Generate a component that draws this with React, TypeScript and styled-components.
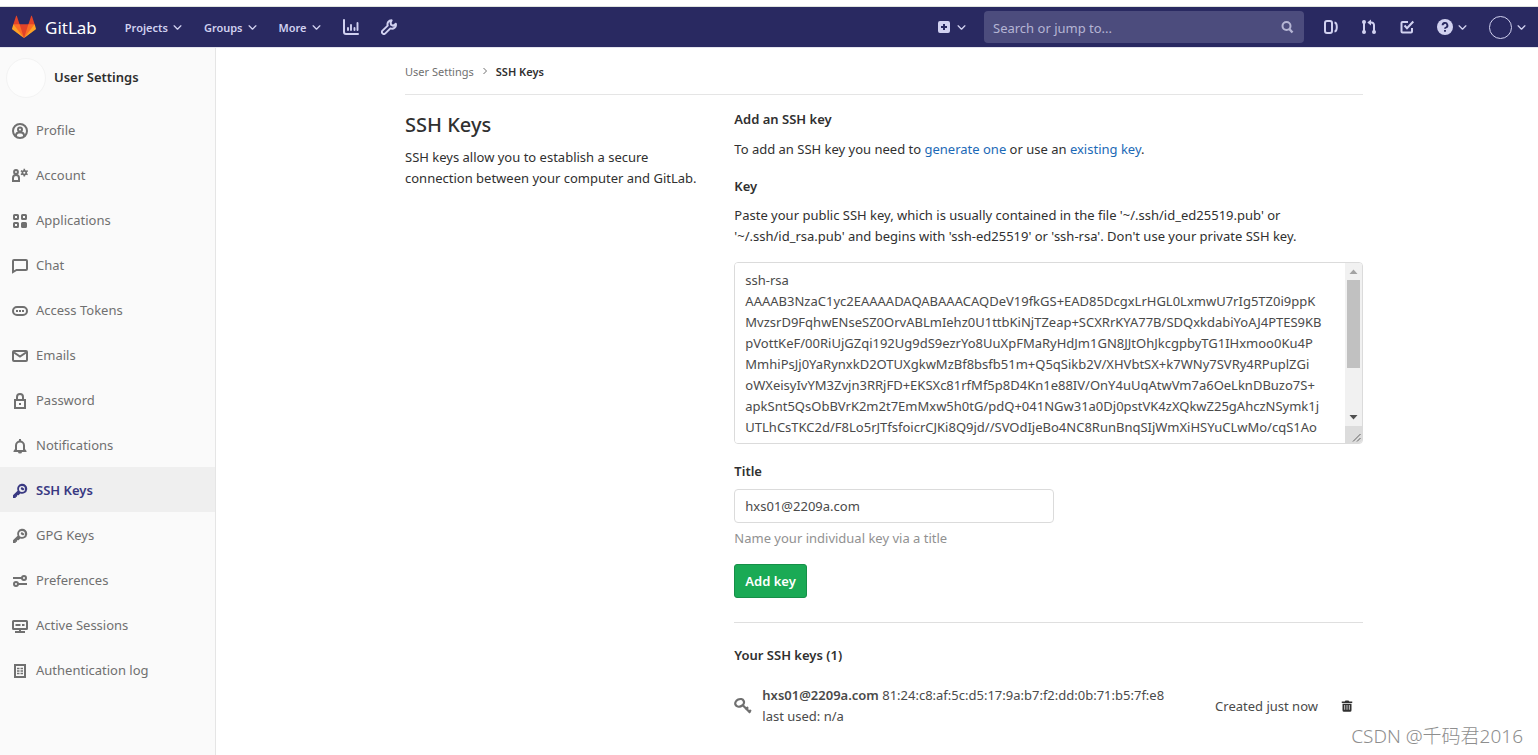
import React from 'react';
import styled, { createGlobalStyle, css } from 'styled-components';

const GlobalStyle = createGlobalStyle`
  *, *::before, *::after { box-sizing: border-box; }
  body {
    margin: 0;
    background: #fff;
    color: #303030;
    font-family: "Noto Sans", "Open Sans", "Noto Sans CJK SC", sans-serif;
    font-size: 13px;
    line-height: 21px;
  }
  h1, h2, p, ul { margin: 0; padding: 0; }
  ul { list-style: none; }
  button, input, textarea { font: inherit; color: inherit; }
  a { color: #1b69b6; text-decoration: none; }
`;

const Page = styled.div`
  display: flex;
  flex-direction: column;
  min-height: 100vh;
  padding-top: 6px;
`;

const Header = styled.header`
  display: flex;
  align-items: center;
  height: 42px;
  padding: 0 12px;
  background: #292961;
  border-top: 1px solid #dfe3df;
  border-bottom: 1px solid #e4e4ee;
  color: #d1d1f0;
`;

const Brand = styled.a`
  display: flex;
  align-items: center;
  gap: 9px;
  margin-right: 28px;
  color: #fff;
  font-size: 17px;
`;

const NavGroup = styled.nav`
  display: flex;
  align-items: center;
  gap: 22px;
`;

const NavButton = styled.button`
  display: flex;
  align-items: center;
  gap: 5px;
  height: 32px;
  padding: 0;
  border: 0;
  background: none;
  color: #d1d1f0;
  font-size: 11px;
  font-weight: 600;
`;

const Spacer = styled.div`
  flex: 1;
`;

const SearchForm = styled.form`
  display: flex;
  align-items: center;
  width: 320px;
  height: 32px;
  margin: 0 19px 0 18px;
  padding: 0 9px;
  border-radius: 4px;
  background: #4c4c7d;
  color: #b5b5d4;
`;

const SearchInput = styled.input`
  flex: 1;
  min-width: 0;
  padding: 2px 0 0;
  border: 0;
  outline: 0;
  background: none;
  font-size: 13px;
  &::placeholder { color: #b5b5d4; opacity: 1; }
`;

const UserCircle = styled.span`
  width: 23px;
  height: 23px;
  border: 1px solid #d1d1f0;
  border-radius: 50%;
`;

const Body = styled.div`
  display: flex;
  flex: 1;
`;

const Sidebar = styled.aside`
  flex: none;
  width: 216px;
  border-right: 1px solid #e5e5e5;
  background: #fafafa;
`;

const SidebarTitle = styled.a`
  display: flex;
  align-items: center;
  gap: 8px;
  height: 59px;
  padding-left: 6px;
  color: #2e2e2e;
  font-weight: 600;
`;

const SidebarAvatar = styled.span`
  width: 40px;
  height: 40px;
  border: 1px solid #f3f3f3;
  border-radius: 50%;
  background: #fdfdfd;
`;

const SidebarLink = styled.a<{ $active?: boolean }>`
  display: flex;
  align-items: center;
  gap: 8px;
  height: 45px;
  padding: 2px 0 0 12px;
  color: #707070;
  ${(p) =>
    p.$active &&
    css`
      background: #efefef;
      color: #393982;
      font-weight: 600;
    `}
`;

const Main = styled.main`
  flex: 1;
  min-width: 0;
  padding: 0 16px 16px 30px;
`;

const Container = styled.div`
  max-width: 958px;
  margin: 0 auto;
`;

const Breadcrumbs = styled.nav`
  display: flex;
  align-items: center;
  gap: 7px;
  height: 47px;
  border-bottom: 1px solid #e5e5e5;
  color: #707070;
  font-size: 11px;
  a { color: #707070; }
  span { color: #303030; font-weight: 600; }
`;

const Row = styled.div`
  display: flex;
  margin: 14px -15px 0;
`;

const Column = styled.section<{ $span: number }>`
  flex: 0 0 calc(100% * ${(p) => p.$span} / 12);
  min-width: 0;
  padding: 0 15px;
`;

const PageTitle = styled.h1`
  margin: 4px 0 10px;
  font-size: 20px;
  line-height: 24px;
  font-weight: 500;
`;

const SectionTitle = styled.h2`
  font-size: 13px;
  line-height: 21px;
  font-weight: 600;
`;

const Text = styled.p`
  margin: 9px 0 16px;
`;

const Description = styled.p`
  margin: 8px 0 15px;
`;

const Label = styled.label`
  display: block;
  font-weight: 600;
`;

const KeyBox = styled.div`
  display: flex;
  height: 182px;
  border: 1px solid #dbdbdb;
  border-radius: 4px;
  overflow: hidden;
`;

const KeyField = styled.textarea`
  display: block;
  flex: 1;
  min-width: 0;
  padding: 7px 0 7px 10px;
  border: 0;
  outline: 0;
  background: #fff;
  color: #4a4a4a;
  white-space: pre;
  overflow-x: hidden;
  overflow-y: scroll;
  resize: none;
  line-height: 21px;
  scrollbar-width: none;
`;

const ScrollTrack = styled.div`
  display: flex;
  flex-direction: column;
  flex: none;
  width: 17px;
  background: #f1f1f1;
`;

const ScrollThumb = styled.div`
  flex: none;
  height: 88px;
  margin: 0 2px;
  background: #c1c1c1;
`;

const Corner = styled.div`
  background: #dcdcdc;
`;

const TitleField = styled.input`
  display: block;
  width: 320px;
  height: 34px;
  margin: 7px 0 5px;
  padding: 0 10px;
  border: 1px solid #dbdbdb;
  border-radius: 4px;
  outline: 0;
  color: #4a4a4a;
`;

const Help = styled.p`
  color: #919191;
`;

const SubmitButton = styled.button`
  height: 34px;
  margin-top: 15px;
  padding: 0 10px;
  border: 1px solid #168f48;
  border-radius: 3px;
  background: #1aaa55;
  color: #fff;
  font-weight: 600;
`;

const FormBlock = styled.div`
  margin-top: 17px;
`;

const Divider = styled.hr`
  height: 1px;
  margin: 24px 0 22px;
  border: 0;
  background: #dfdfdf;
`;

const KeyItem = styled.li`
  display: flex;
  align-items: center;
  gap: 10px;
  margin-top: 19px;
  color: #4a4a4a;
`;

const KeyInfo = styled.div`
  flex: 1;
  strong { font-weight: 600; }
`;

const KeyMark = styled.span`
  color: #707070;
`;

const DeleteButton = styled.button`
  display: grid;
  place-items: center;
  width: 32px;
  height: 32px;
  margin-left: 3px;
  padding: 0;
  border: 0;
  background: none;
  color: #303030;
`;

const Watermark = styled.div`
  position: absolute;
  right: 15px;
  bottom: 6px;
  color: #8e8e8e;
  font-size: 19px;
  font-weight: 300;
  line-height: 26px;
`;

type IconName =
  | 'profile' | 'account' | 'applications' | 'chat' | 'token' | 'mail' | 'lock' | 'bell'
  | 'key' | 'preferences' | 'monitor' | 'log' | 'chart' | 'wrench' | 'plus' | 'search'
  | 'issues' | 'merge' | 'todo' | 'help' | 'trash' | 'keyLarge' | 'chevron' | 'angle';

const line = { fill: 'none', stroke: 'currentColor', strokeWidth: 2 } as const;

const shapes: Record<IconName, React.ReactNode> = {
  profile: (
    <g {...line}>
      <circle cx="8" cy="8" r="7" />
      <circle cx="8" cy="6.6" r="2" />
      <path d="M4 13v-1a3 3 0 0 1 3-2.4h2A3 3 0 0 1 12 12v1" />
    </g>
  ),
  account: (
    <g {...line}>
      <circle cx="4" cy="4" r="1.9" />
      <path d="M1 13v-3a3 3 0 0 1 6 0v3Z" />
      <circle cx="12.300" cy="4.700" r="1.900" strokeWidth="1.700" />
      <path d="M12.300 .8v2M12.300 6.600v2M8.900 2.750l1.600.9M14.100 5.750l1.600.9M8.900 6.650l1.600-.9M14.100 3.650l1.600-.9" strokeWidth="1.600" />
    </g>
  ),
  applications: (
    <g {...line}>
      <rect x="2" y="2" width="4" height="4" rx=".5" />
      <rect x="10" y="2" width="4" height="4" rx=".5" />
      <rect x="2" y="10" width="4" height="4" rx=".5" />
      <rect x="10" y="10" width="4" height="4" rx=".5" fill="currentColor" />
    </g>
  ),
  chat: <path {...line} d="M1 14V3a1 1 0 0 1 1-1h12a1 1 0 0 1 1 1v8a1 1 0 0 1-1 1H4.500Z" />,
  token: (
    <g>
      <rect {...line} x="1" y="4" width="14" height="8" rx="4" />
      <path d="M4 7h2v2H4zM7 7h2v2H7zM10 7h2v2h-2z" fill="currentColor" />
    </g>
  ),
  mail: (
    <g {...line}>
      <rect x="1" y="3" width="14" height="10" rx="1" />
      <path d="M2 4.500l6 4 6-4" />
    </g>
  ),
  lock: (
    <g {...line}>
      <rect x="3" y="7" width="10" height="8" />
      <path d="M5 7V4a3 3 0 0 1 6 0v3" />
      <path d="M7 11h2" />
    </g>
  ),
  bell: (
    <g>
      <path {...line} d="M4 12V7.500a4 4 0 0 1 8 0V12" />
      <path d="M1.500 13 3 11h2v1h6v-1h2l1.500 2v1h-13zM7 1h2v2.500H7zM6 14h4a2 1.500 0 0 1-4 0z" fill="currentColor" />
    </g>
  ),
  key: (
    <path
      fill="currentColor"
      fillRule="evenodd"
      d="M5.600 7.700A5 5 0 1 1 8.300 10.400L6.500 12.200H5v1.500H3.700V15H1v-2.700zM10 3a3 3 0 1 0 0 6 3 3 0 0 0 0-6zm0 1.200a1 1 0 0 1 1 1h1a1 1 0 0 1-2 1.500 1 1 0 0 1 0-2.500z"
    />
  ),
  preferences: (
    <g {...line}>
      <path d="M1 5h9M6 11h9" />
      <circle cx="12" cy="5" r="2" />
      <circle cx="4" cy="11" r="2" />
    </g>
  ),
  monitor: (
    <g {...line}>
      <rect x="1" y="3" width="14" height="8" rx=".5" />
      <path d="M3.500 7h5M10 7h2.500M8 11v3M3 14h10" />
    </g>
  ),
  log: (
    <g {...line}>
      <rect x="3" y="2" width="10" height="12" />
      <path d="M5 5.500h2.500M8.500 5.500H11M5 8h2.500M8.500 8H11M5 10.500h2.500M8.500 10.500H11" strokeWidth="1.500" />
    </g>
  ),
  chart: (
    <g {...line} strokeLinecap="round">
      <path d="M1 1v12a2 2 0 0 0 2 2h12" />
      <path d="M5 9v2M8 6v5M11.500 9v2M14.500 4v7" strokeWidth="1.900" />
    </g>
  ),
  wrench: (
    <path {...line} strokeWidth="2" strokeLinejoin="round" d="M10.600 1.300a4 4 0 0 0-3.900 5.300L1.500 11.600a1.900 1.900 0 0 0 2.800 2.800l5.100-5a4 4 0 0 0 5.400-4.700l-2.500 2-2.200-.8-.5-2.200z" />
  ),
  plus: (
    <path fill="currentColor" fillRule="evenodd" d="M4 2h8a2 2 0 0 1 2 2v8a2 2 0 0 1-2 2H4a2 2 0 0 1-2-2V4a2 2 0 0 1 2-2zm3 3v2H5v2h2v2h2V9h2V7H9V5z" />
  ),
  search: (
    <g {...line}>
      <circle cx="7.500" cy="7" r="4" />
      <path d="M10.300 10l3.200 3.500" strokeWidth="2.400" />
    </g>
  ),
  issues: (
    <g {...line}>
      <rect x="2" y="2" width="7" height="12" rx="2" />
      <path d="M11.500 3.500c2 .3 2.300 1.500 2.300 4.500s-.3 4.200-2.300 4.500" />
    </g>
  ),
  merge: (
    <g>
      <path {...line} d="M3 4v9M13 13V6a2.500 2.500 0 0 0-2.500-2.500H8" />
      <path d="M10 .5v6L6.300 3.500z" fill="currentColor" />
      <circle cx="3" cy="3" r="2" fill="currentColor" />
      <circle cx="3" cy="13" r="2" fill="currentColor" />
      <circle cx="13" cy="13" r="2" fill="currentColor" />
    </g>
  ),
  todo: (
    <g {...line}>
      <path d="M9 3H3.500a1 1 0 0 0-1 1v8.500a1 1 0 0 0 1 1H12a1 1 0 0 0 1-1V9" />
      <path d="M5.500 6.500 8 9.200l6.300-6.700" />
    </g>
  ),
  help: (
    <g>
      <circle cx="8" cy="8" r="8" fill="currentColor" />
      <path d="M5.600 6.300a2.400 2.400 0 1 1 3.400 2.200c-.7.300-1 .6-1 1.200M8 11v1.800" fill="none" stroke="#292961" strokeWidth="1.900" />
    </g>
  ),
  trash: (
    <path
      fill="currentColor"
      fillRule="evenodd"
      d="M5 2 6 .5h4L11 2h4v2H1V2zM2 5h12v8.500a2 2 0 0 1-2 2H4a2 2 0 0 1-2-2zm2.500 1.500v6.500h1V6.500zm3 0v6.500h1V6.500zm3 0v6.500h1V6.500z"
    />
  ),
  keyLarge: (
    <g {...line}>
      <ellipse cx="5" cy="5.200" rx="4" ry="3.200" transform="rotate(-25 5 5.200)" />
      <path d="M7.800 7.300 14.500 14M10.300 11.300l2.200-2.300M12.800 13.800l2.200-2.300" />
    </g>
  ),
  chevron: <path {...line} strokeWidth="2.300" strokeLinecap="round" strokeLinejoin="round" d="M2 5l6 6 6-6" />,
  angle: <path {...line} d="M5 2l6 6-6 6" />,
};

const Glyph = styled.svg`
  flex: none;
  display: block;
`;

function Icon({ name, size = 16 }: { name: IconName; size?: number }) {
  return (
    <Glyph width={size} height={size} viewBox="0 0 16 16" aria-hidden="true">
      {shapes[name]}
    </Glyph>
  );
}

function Logo() {
  return (
    <Glyph width="24" height="24" viewBox="0 0 36 36" aria-hidden="true">
      <path fill="#e24329" d="M2 14l9.380 9v-9l-4-12.280c-.205-.632-1.176-.632-1.380 0z" />
      <path fill="#e24329" d="M34 14l-9.380 9v-9l4-12.280c.205-.632 1.176-.632 1.380 0z" />
      <path fill="#e24329" d="M18 34.380 3 14h30z" />
      <path fill="#fc6d26" d="M18 34.380 11.380 14H2l4 11z" />
      <path fill="#fc6d26" d="M18 34.380 24.620 14H34l-4 11z" />
      <path fill="#fca326" d="M2 14 .1 20.160c-.18.565 0 1.200.5 1.560l17.420 12.660z" />
      <path fill="#fca326" d="M34 14l1.900 6.160c.18.565 0 1.200-.5 1.560L18 34.380z" />
    </Glyph>
  );
}

const TrackSpace = styled.div`
  flex: 1;
`;

function Scrollbar() {
  return (
    <ScrollTrack aria-hidden="true">
      <Glyph width="17" height="17" viewBox="0 0 17 17">
        <path d="M4.500 11h8l-4-4.500z" fill="#a3a3a3" />
      </Glyph>
      <ScrollThumb />
      <TrackSpace />
      <Glyph width="17" height="17" viewBox="0 0 17 17">
        <path d="M4.500 6h8l-4 4.500z" fill="#505050" />
      </Glyph>
      <Corner>
        <Glyph width="17" height="17" viewBox="0 0 17 17">
          <path d="M8 15.500 15.500 8M12 15.500 15.500 12" stroke="#606060" fill="none" />
        </Glyph>
      </Corner>
    </ScrollTrack>
  );
}

const links: { label: string; icon: IconName; active?: boolean }[] = [
  { label: 'Profile', icon: 'profile' },
  { label: 'Account', icon: 'account' },
  { label: 'Applications', icon: 'applications' },
  { label: 'Chat', icon: 'chat' },
  { label: 'Access Tokens', icon: 'token' },
  { label: 'Emails', icon: 'mail' },
  { label: 'Password', icon: 'lock' },
  { label: 'Notifications', icon: 'bell' },
  { label: 'SSH Keys', icon: 'key', active: true },
  { label: 'GPG Keys', icon: 'key' },
  { label: 'Preferences', icon: 'preferences' },
  { label: 'Active Sessions', icon: 'monitor' },
  { label: 'Authentication log', icon: 'log' },
];

const publicKey = [
  'ssh-rsa',
  'AAAAB3NzaC1yc2EAAAADAQABAAACAQDeV19fkGS+EAD85DcgxLrHGL0LxmwU7rIg5TZ0i9ppK',
  'MvzsrD9FqhwENseSZ0OrvABLmIehz0U1ttbKiNjTZeap+SCXRrKYA77B/SDQxkdabiYoAJ4PTES9KB',
  'pVottKeF/00RiUjGZqi192Ug9dS9ezrYo8UuXpFMaRyHdJm1GN8JJtOhJkcgpbyTG1IHxmoo0Ku4P',
  'MmhiPsJj0YaRynxkD2OTUXgkwMzBf8bsfb51m+Q5qSikb2V/XHVbtSX+k7WNy7SVRy4RPuplZGi',
  'oWXeisyIvYM3Zvjn3RRjFD+EKSXc81rfMf5p8D4Kn1e88IV/OnY4uUqAtwVm7a6OeLknDBuzo7S+',
  'apkSnt5QsObBVrK2m2t7EmMxw5h0tG/pdQ+041NGw31a0Dj0pstVK4zXQkwZ25gAhczNSymk1j',
  'UTLhCsTKC2d/F8Lo5rJTfsfoicrCJKi8Q9jd//SVOdIjeBo4NC8RunBnqSIjWmXiHSYuCLwMo/cqS1Ao',
].join('\n');

export default function App() {
  return (
    <Page>
      <GlobalStyle />
      <Header>
        <Brand href="#">
          <Logo />
          GitLab
        </Brand>
        <NavGroup aria-label="Main">
          {['Projects', 'Groups', 'More'].map((label) => (
            <NavButton key={label} type="button">
              {label}
              <Icon name="chevron" size={9} />
            </NavButton>
          ))}
          <NavButton type="button" aria-label="Instance statistics">
            <Icon name="chart" />
          </NavButton>
          <NavButton type="button" aria-label="Admin area">
            <Icon name="wrench" />
          </NavButton>
        </NavGroup>
        <Spacer />
        <NavButton type="button" aria-label="New">
          <Icon name="plus" />
          <Icon name="chevron" size={9} />
        </NavButton>
        <SearchForm role="search">
          <SearchInput aria-label="Search" placeholder="Search or jump to..." />
          <Icon name="search" />
        </SearchForm>
        <NavGroup aria-label="User">
          <NavButton type="button" aria-label="Issues"><Icon name="issues" /></NavButton>
          <NavButton type="button" aria-label="Merge requests"><Icon name="merge" /></NavButton>
          <NavButton type="button" aria-label="To-Do List"><Icon name="todo" /></NavButton>
          <NavButton type="button" aria-label="Help">
            <Icon name="help" />
            <Icon name="chevron" size={9} />
          </NavButton>
          <NavButton type="button" aria-label="Your account">
            <UserCircle />
            <Icon name="chevron" size={9} />
          </NavButton>
        </NavGroup>
      </Header>
      <Body>
        <Sidebar>
          <SidebarTitle href="#">
            <SidebarAvatar />
            User Settings
          </SidebarTitle>
          <ul>
            {links.map((l) => (
              <li key={l.label}>
                <SidebarLink href="#" $active={l.active}>
                  <Icon name={l.icon} />
                  {l.label}
                </SidebarLink>
              </li>
            ))}
          </ul>
        </Sidebar>
        <Main>
          <Container>
            <Breadcrumbs aria-label="Breadcrumb">
              <a href="#">User Settings</a>
              <Icon name="angle" size={8} />
              <span>SSH Keys</span>
            </Breadcrumbs>
            <Row>
              <Column $span={4}>
                <PageTitle>SSH Keys</PageTitle>
                <p>SSH keys allow you to establish a secure connection between your computer and GitLab.</p>
              </Column>
              <Column $span={8}>
                <SectionTitle>Add an SSH key</SectionTitle>
                <Text>
                  To add an SSH key you need to <a href="#">generate one</a> or use an <a href="#">existing key</a>.
                </Text>
                <form>
                  <Label htmlFor="key">Key</Label>
                  <Description>
                    Paste your public SSH key, which is usually contained in the file '~/.ssh/id_ed25519.pub' or
                    '~/.ssh/id_rsa.pub' and begins with 'ssh-ed25519' or 'ssh-rsa'. Don't use your private SSH key.
                  </Description>
                  <KeyBox>
                    <KeyField id="key" defaultValue={publicKey} spellCheck={false} />
                    <Scrollbar />
                  </KeyBox>
                  <FormBlock>
                    <Label htmlFor="title">Title</Label>
                    <TitleField id="title" type="text" defaultValue="hxs01@2209a.com" />
                    <Help>Name your individual key via a title</Help>
                  </FormBlock>
                  <SubmitButton type="button">Add key</SubmitButton>
                </form>
                <Divider />
                <SectionTitle>Your SSH keys (1)</SectionTitle>
                <ul>
                  <KeyItem>
                    <KeyMark><Icon name="keyLarge" size={18} /></KeyMark>
                    <KeyInfo>
                      <div><strong>hxs01@2209a.com</strong> 81:24:c8:af:5c:d5:17:9a:b7:f2:dd:0b:71:b5:7f:e8</div>
                      <div>last used: n/a</div>
                    </KeyInfo>
                    <span>Created just now</span>
                    <DeleteButton type="button" aria-label="Remove key">
                      <Icon name="trash" size={12} />
                    </DeleteButton>
                  </KeyItem>
                </ul>
              </Column>
            </Row>
          </Container>
        </Main>
      </Body>
      <Watermark>CSDN @千码君2016</Watermark>
    </Page>
  );
}
